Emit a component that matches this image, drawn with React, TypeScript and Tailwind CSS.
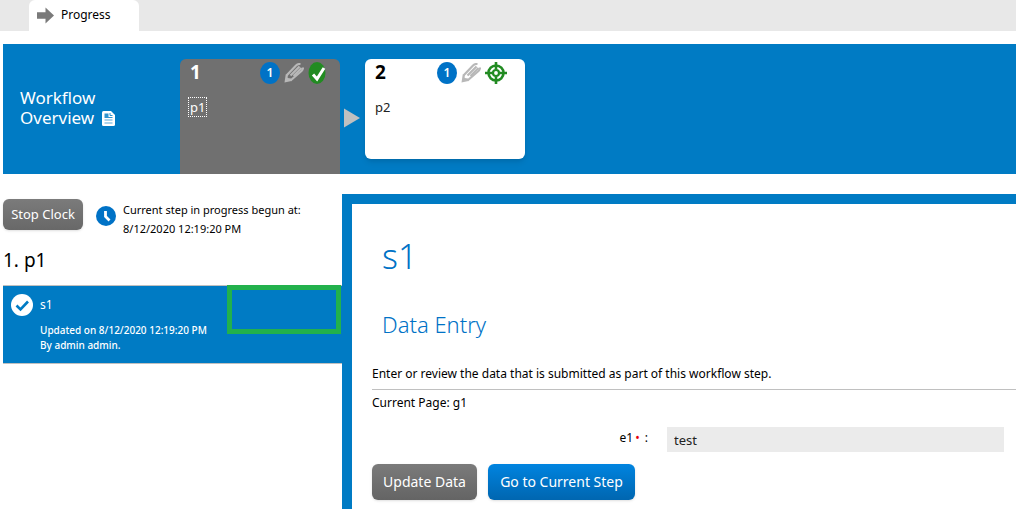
import type { ReactNode } from 'react';

type StepCardProps = {
  number: number;
  name: string;
  count: number;
  active?: boolean;
  status: ReactNode;
};

function ArrowIcon() {
  return (
    <svg width="17" height="17" viewBox="0 0 18 17" aria-hidden="true">
      <path d="M0 5h9V0l9 8.500L9 17v-5H0z" fill="#7a7a7a" />
    </svg>
  );
}

function DocumentIcon() {
  return (
    <svg width="13" height="15" viewBox="0 0 13 15" className="ml-2 inline-block align-[-2px]" aria-hidden="true">
      <path d="M1.500 0H9l4 4v9.500q0 1.500-1.500 1.500h-10Q0 15 0 13.500v-12Q0 0 1.500 0z" fill="#fff" />
      <path d="M2.500 2.500h4v3.500h4V7h-8z" fill="#2f94d0" />
      <path d="M8 2v2.500h2.500" fill="none" stroke="#2f94d0" />
      <path d="M2.500 9h8M2.500 12h8" stroke="#5aa9da" strokeWidth="1.200" />
    </svg>
  );
}

function PencilIcon() {
  return (
    <svg width="20" height="20" viewBox="0 0 20 20" aria-hidden="true">
      <g fill="none" stroke="#b8b8b8" strokeWidth="2.200">
        <path d="M2.500 12.500 12 2.500q2-1.700 4.500-1.500" />
        <path d="M6.500 12.500 15.500 3.500" />
        <path d="M6.500 17.500 17.500 8q1.500-1.500 1.500-3.500" />
        <path d="M9.500 13 17.500 5" />
      </g>
      <path d="m.500 19.500 1.200-8 2 .5v3l3.300.500.500 2.500z" fill="#b8b8b8" />
    </svg>
  );
}

function DoneIcon() {
  return (
    <svg width="18" height="22" viewBox="0 0 18 22" aria-label="Done">
      <ellipse cx="9" cy="11" rx="8.500" ry="11" fill="#228b22" />
      <path d="m5 12.500 4 4.500L16 6" fill="none" stroke="#fff" strokeWidth="3" />
    </svg>
  );
}

function TargetIcon() {
  return (
    <svg width="22" height="22" viewBox="0 0 22 22" aria-label="Current">
      <g fill="none" stroke="#228b22">
        <circle cx="11" cy="11" r="7.500" strokeWidth="2.600" />
        <circle cx="11" cy="11" r="3" strokeWidth="2.200" />
        <path d="M11 0v7.500M11 14.500V22M0 11h7.500M14.500 11H22" strokeWidth="2.600" />
      </g>
    </svg>
  );
}

function ClockIcon() {
  return (
    <svg width="20" height="20" viewBox="0 0 20 20" aria-hidden="true">
      <circle cx="10" cy="10" r="10" fill="#0072c6" />
      <path d="M9.500 5v5.500l4 4" fill="none" stroke="#fff" strokeWidth="2.800" />
    </svg>
  );
}

function CheckCircleIcon() {
  return (
    <svg width="22" height="22" viewBox="0 0 22 22" aria-hidden="true">
      <circle cx="11" cy="11" r="11" fill="#fff" />
      <path d="m5.500 11.500 4 4 7.500-8" fill="none" stroke="#007bc4" strokeWidth="2.600" />
    </svg>
  );
}

function StepCard({ number, name, count, active, status }: StepCardProps) {
  return (
    <section
      className={
        active
          ? 'w-40 self-stretch rounded-t-md bg-[#707070] pr-3.5 text-white'
          : 'h-[100px] w-40 rounded-md bg-white pr-[18px] text-black shadow-md'
      }
    >
      <div className="flex h-7 items-center gap-1 pl-2.5">
        <h2 className="mr-auto text-[19px] font-bold">{number}</h2>
        <span className="flex h-[22px] w-5 items-center justify-center rounded-[50%] bg-[#0072c6] text-xs font-semibold text-white">
          {count}
        </span>
        <PencilIcon />
        {status}
      </div>
      <div className="px-2 pt-2.5">
        <a
          href="#step"
          className={
            active
              ? 'inline-block border border-dotted border-white px-px text-[13px] leading-[18px]'
              : 'inline-block px-0.5 py-px text-[13px] leading-[18px] text-[#222]'
          }
        >
          {name}
        </a>
      </div>
    </section>
  );
}

export default function App() {
  return (
    <div className="flex min-h-screen flex-col bg-white font-['Noto_Sans',sans-serif] text-xs text-black">
      <nav className="flex h-[31px] bg-[#e8e8e8] pl-[29px]">
        <a href="#progress" className="flex w-[110px] items-center gap-[7px] rounded-t-md bg-white pb-px pl-2">
          <ArrowIcon />
          Progress
        </a>
      </nav>

      <header className="mt-[13px] ml-[3px] flex h-[130px] items-start bg-[#007bc4] pt-[15px]">
        <h1 className="w-[177px] self-center pb-[18px] pl-[17px] text-[17px] leading-5 text-white">
          Workflow
          <br />
          Overview
          <DocumentIcon />
        </h1>
        <StepCard number={1} name="p1" count={1} active status={<DoneIcon />} />
        <svg width="25" height="20" viewBox="0 0 25 20" className="mt-[49px]" aria-hidden="true">
          <path d="M4 0.500 20 10 4 19.500z" fill="#c0c0c0" />
        </svg>
        <StepCard number={2} name="p2" count={1} status={<TargetIcon />} />
      </header>

      <div className="mt-5 flex grow">
        <aside className="ml-[3px] w-[339px] shrink-0 pt-[5px]">
          <div className="flex items-start">
            <button
              type="button"
              className="h-[31px] w-20 rounded-md bg-linear-to-b from-[#7b7b7b] to-[#686868] text-[13px] text-white shadow"
            >
              Stop Clock
            </button>
            <span className="mt-[7px] ml-[13px]">
              <ClockIcon />
            </span>
            <p className="mt-px ml-[7px] text-[11px] leading-[19px]">
              Current step in progress begun at:
              <br />
              8/12/2020 12:19:20 PM
            </p>
          </div>
          <h2 className="mt-2 text-[19px] leading-7">1. p1</h2>
          <section className="relative mt-[11px] flex h-[79px] gap-[7px] border-y border-[#c0c0c0] bg-[#007bc4] pt-2 pl-2 text-white">
            <CheckCircleIcon />
            <div>
              <h3 className="text-xs leading-[22px]">s1</h3>
              <p className="mt-[7px] text-[10px] leading-[15px] font-medium">
                Updated on 8/12/2020 12:19:20 PM
                <br />
                By admin admin.
              </p>
            </div>
            <div className="absolute -top-px right-px h-[49px] w-[114px] border-[5px] border-[#22b14c]" />
          </section>
        </aside>

        <main className="grow border-t-[10px] border-l-[10px] border-[#007bc4] pl-5">
          <h2 className="mt-8 ml-2.5 text-[34px] leading-10 font-light text-[#0072c6]">s1</h2>
          <h3 className="mt-8 ml-2.5 text-[22px] leading-8 font-light text-[#0072c6]">Data Entry</h3>
          <p className="mt-6 border-b border-[#c0c0c0] pb-1.5 leading-[19px]">
            Enter or review the data that is submitted as part of this workflow step.
          </p>
          <p className="mt-[3px] leading-[19px]">Current Page: g1</p>
          <form>
            <div className="mt-[15px] flex gap-[19px] pr-3">
              <label htmlFor="e1" className="w-[276px] text-right leading-[22px]">
                e1<span className="px-0.5 text-red-600">•</span> :
              </label>
              <input
                id="e1"
                defaultValue="test"
                className="h-[25px] min-w-0 grow bg-[#ebebeb] px-[7px] text-[13px] text-[#222]"
              />
            </div>
            <div className="mt-3 flex gap-[11px]">
              <button
                type="button"
                className="h-9 w-[105px] rounded-md bg-linear-to-b from-[#7b7b7b] to-[#646464] text-sm text-white shadow"
              >
                Update Data
              </button>
              <button
                type="button"
                className="h-9 w-[147px] rounded-md bg-linear-to-b from-[#0084e0] to-[#0066b0] text-sm text-white shadow"
              >
                Go to Current Step
              </button>
            </div>
          </form>
        </main>
      </div>
    </div>
  );
}
